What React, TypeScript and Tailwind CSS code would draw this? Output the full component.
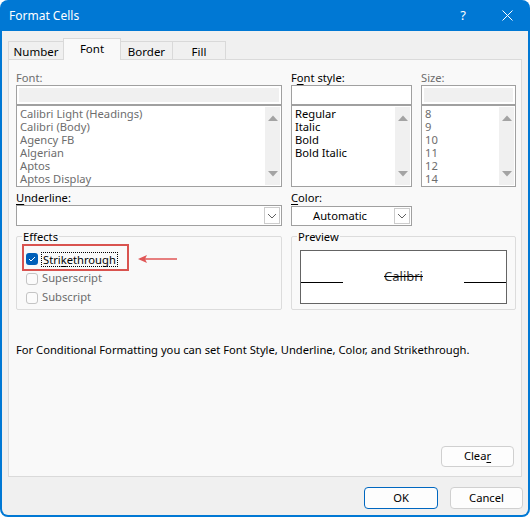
import type { ReactNode } from 'react'

const FONT = { fontFamily: '"Segoe UI", "Noto Sans", sans-serif' }

function ArrowUp() {
  return (
    <svg width="10" height="6" viewBox="0 0 10 6">
      <path d="M0 6 L5 0.5 L10 6 Z" fill="#a3a3a3" />
    </svg>
  )
}

function ArrowDown() {
  return (
    <svg width="10" height="6" viewBox="0 0 10 6">
      <path d="M0 0 L5 5.5 L10 0 Z" fill="#a3a3a3" />
    </svg>
  )
}

function Chevron() {
  return (
    <svg width="10" height="6" viewBox="0 0 10 6">
      <path d="M1 1 L5 5 L9 1" fill="none" stroke="#606060" strokeWidth="1" />
    </svg>
  )
}

function ListBox({ items, disabled }: { items: string[]; disabled?: boolean }) {
  return (
    <div className="flex h-[82px] border border-[#a0a0a0] bg-white">
      <div className={`flex-1 pl-[3px] pt-[1px] leading-[13px] ${disabled ? 'text-[#6d6d6d]' : 'text-black'}`}>
        {items.map((it) => (
          <div key={it} className="h-[13px] whitespace-nowrap">
            {it}
          </div>
        ))}
      </div>
      <div className="my-[1px] mr-[1px] flex w-[15px] flex-col items-center justify-between bg-[#f0f0f0] py-[8px]">
        <ArrowUp />
        <ArrowDown />
      </div>
    </div>
  )
}

function Combo({ children, h = 'h-[21px]' }: { children?: ReactNode; h?: string }) {
  return (
    <div className={`flex ${h} border border-[#a0a0a0] bg-white`}>
      <div className="flex flex-1 items-center justify-center">{children}</div>
      <div className="my-[1px] mr-[1px] flex w-[16px] items-center justify-center border border-[#cccccc] bg-white">
        <Chevron />
      </div>
    </div>
  )
}

function CheckBox({ checked, disabled }: { checked?: boolean; disabled?: boolean }) {
  if (checked) {
    return (
      <div className="flex h-[12px] w-[12px] items-center justify-center rounded-[3px] bg-[#005fb8]">
        <svg width="8" height="6" viewBox="0 0 8 6">
          <path d="M1 3 L3 5 L7 1" fill="none" stroke="white" strokeWidth="1" />
        </svg>
      </div>
    )
  }
  return (
    <div
      className={`h-[12px] w-[12px] rounded-[3px] border ${disabled ? 'border-[#c4c4c4] bg-[#fbfbfb]' : 'border-[#8a8a8a] bg-white'}`}
    />
  )
}

function Button({ children, primary, w }: { children: ReactNode; primary?: boolean; w: string }) {
  return (
    <div
      className={`flex h-[22px] ${w} items-center justify-center rounded-[4px] border bg-[#fdfdfd] text-black ${primary ? 'border-[#0067c0]' : 'border-[#d0d0d0]'}`}
    >
      {children}
    </div>
  )
}

export default function App() {
  return (
    <div className="h-[518px] w-[532px] bg-white text-[11.2px]" style={FONT}>
      <div className="flex h-[517px] w-[530px] flex-col rounded-[8px] bg-[#0078d4]">
        {/* Title bar */}
        <div className="flex h-[31px] items-center pl-[9px] text-[12px] text-white">
          <span className="flex-1">Format Cells</span>
          <span className="mr-[36px] text-[13px]">?</span>
          <svg className="mr-[17px]" width="11" height="11" viewBox="0 0 11 11">
            <path d="M0.5 0.5 L10.5 10.5 M10.5 0.5 L0.5 10.5" stroke="white" strokeWidth="1" />
          </svg>
        </div>

        {/* Body */}
        <div className="mx-[2px] mb-[2px] flex flex-1 flex-col rounded-b-[6px] bg-[#f0f0f0] px-[6px] pt-[7px]">
          <div className="flex items-end text-[11.5px]">
            <div className="flex h-[18px] w-[56px] items-center justify-center border border-b-0 border-[#d9d9d9] bg-[#f0f0f0] pt-[2px]">
              Number
            </div>
            <div className="relative z-10 -mb-px -ml-px flex h-[22px] w-[58px] items-center justify-center border border-b-0 border-[#d9d9d9] bg-[#f9f9f9] pb-[1px]">
              Font
            </div>
            <div className="-ml-px flex h-[18px] w-[53px] items-center justify-center border border-b-0 border-[#d9d9d9] bg-[#f0f0f0] pt-[2px]">
              Border
            </div>
            <div className="-ml-px flex h-[18px] w-[54px] items-center justify-center border border-b-0 border-[#d9d9d9] bg-[#f0f0f0] pt-[2px]">
              Fill
            </div>
          </div>

          {/* Panel */}
          <div className="flex h-[418px] flex-col border border-[#dadada] bg-[#f9f9f9] pl-[7px] pr-[5px] pt-[10px]">
            <div className="grid grid-cols-[266px_121px_95px] gap-x-[9px]">
              <div className="h-[15px] leading-[15px] text-[#6d6d6d]">Font:</div>
              <div className="h-[15px] leading-[15px]">
                F<u className="underline-offset-2">o</u>nt style:
              </div>
              <div className="h-[15px] leading-[15px] text-[#6d6d6d]">Size:</div>

              <div className="h-[20px] border border-[#a0a0a0] bg-white p-[2px]">
                <div className="h-full bg-[#f0f0f0]" />
              </div>
              <div className="h-[20px] border border-[#a0a0a0] bg-white" />
              <div className="h-[20px] border border-[#a0a0a0] bg-white p-[2px]">
                <div className="h-full bg-[#f0f0f0]" />
              </div>

              <ListBox
                disabled
                items={['Calibri Light (Headings)', 'Calibri (Body)', 'Agency FB', 'Algerian', 'Aptos', 'Aptos Display']}
              />
              <ListBox items={['Regular', 'Italic', 'Bold', 'Bold Italic']} />
              <ListBox disabled items={['8', '9', '10', '11', '12', '14']} />

              <div className="mt-[3px] h-[15px] leading-[15px]">
                <u className="underline-offset-2">U</u>nderline:
              </div>
              <div className="col-span-2 mt-[3px] h-[15px] leading-[15px]">
                <u className="underline-offset-2">C</u>olor:
              </div>

              <Combo />
              <div className="pt-[1px]">
                <Combo h="h-[20px]">
                  <span className="pr-[6px]">Automatic</span>
                </Combo>
              </div>
              <div />

              {/* Effects */}
              <fieldset className="mt-[3px] rounded-[2px] border border-[#dcdcdc] px-0 pb-[2px]">
                <legend className="ml-[5px] px-[1px] leading-[15px]">Effects</legend>
                <div className="flex items-center">
                  <div className="ml-[5px] flex h-[27px] w-[107px] items-center border-2 border-[#d9534f] pl-[2px] pt-[3px]">
                    <CheckBox checked />
                    <span className="ml-[3px] border border-dotted border-black px-[1px] leading-[13px]">
                      Stri<u className="underline-offset-2">k</u>ethrough
                    </span>
                  </div>
                  <svg className="ml-[9px] mt-[2px]" width="40" height="10" viewBox="0 0 40 10">
                    <path d="M2 5 H39" stroke="#e05656" strokeWidth="1.6" />
                    <path d="M0 5 L9 1 L7 5 L9 9 Z" fill="#e05656" />
                  </svg>
                </div>
                <div className="ml-[9px] mt-[-2px] flex h-[19px] items-center text-[#6d6d6d]">
                  <CheckBox disabled />
                  <span className="ml-[4px]">Superscript</span>
                </div>
                <div className="ml-[9px] flex h-[19px] items-center text-[#6d6d6d]">
                  <CheckBox disabled />
                  <span className="ml-[4px]">Subscript</span>
                </div>
              </fieldset>

              {/* Preview */}
              <fieldset className="col-span-2 mt-[3px] rounded-[2px] border border-[#dcdcdc] px-0 pb-[3px]">
                <legend className="ml-[5px] px-[1px] leading-[15px]">Preview</legend>
                <div className="ml-[8px] mr-[8px] mt-[6px] flex h-[54px] items-center border border-[#646464] bg-white">
                  <div className="mt-[10px] h-px w-[42px] bg-black" />
                  <div className="flex-1 text-center text-[13px] text-[#333333] line-through decoration-black">
                    Calibri
                  </div>
                  <div className="mt-[10px] h-px w-[42px] bg-black" />
                </div>
              </fieldset>
            </div>

            <p className="mt-[32px] leading-[15px] text-black">
              For Conditional Formatting you can set Font Style, Underline, Color, and Strikethrough.
            </p>

            <div className="flex flex-1 items-end justify-end pb-[9px] pr-[2px]">
              <div className="flex h-[21px] w-[73px] items-center justify-center rounded-[4px] border border-[#d0d0d0] bg-[#fdfdfd]">
                Clea<u className="underline-offset-2">r</u>
              </div>
            </div>
          </div>

          {/* Footer buttons */}
          <div className="-mr-px flex justify-end gap-[12px] pt-[10px]">
            <Button primary w="w-[74px]">
              OK
            </Button>
            <Button w="w-[73px]">Cancel</Button>
          </div>
        </div>
      </div>
    </div>
  )
}
